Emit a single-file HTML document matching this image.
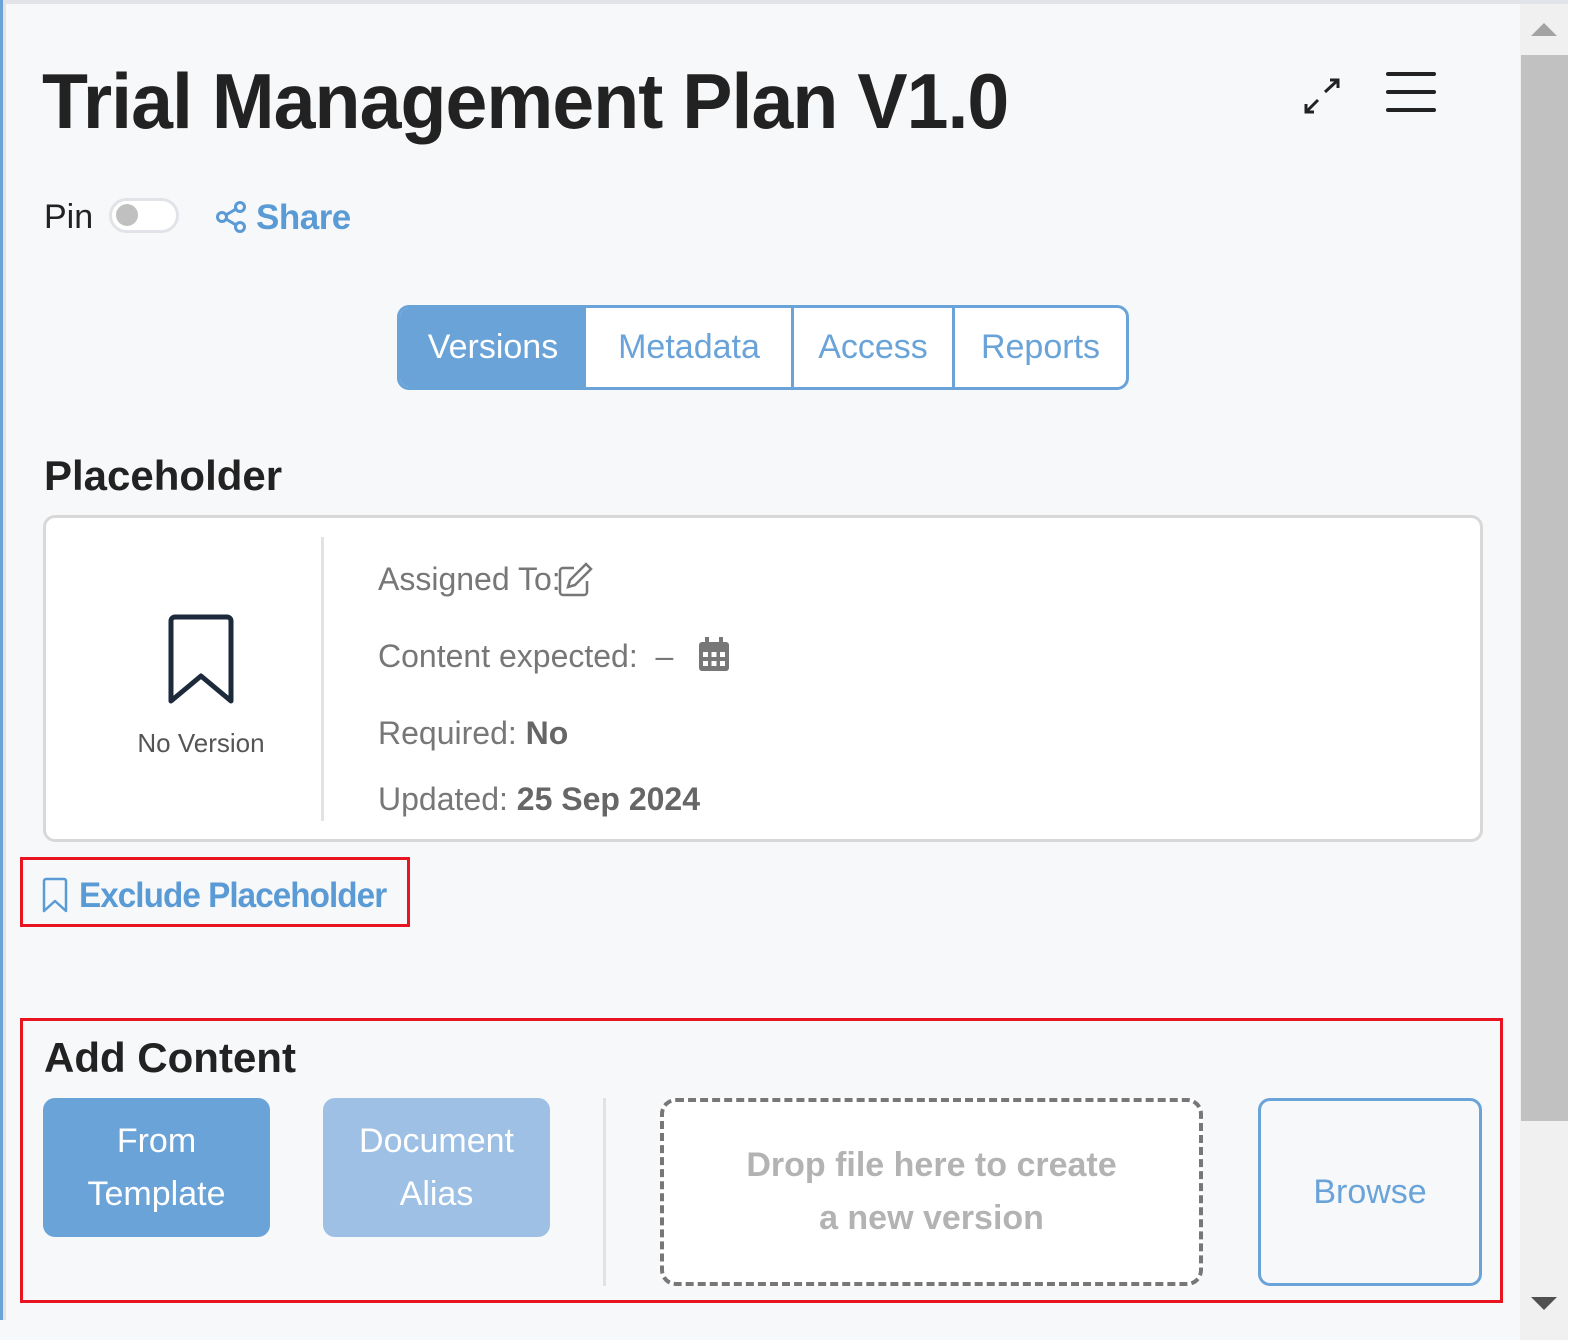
<!DOCTYPE html>
<html><head><meta charset="utf-8"><style>
*{margin:0;padding:0;box-sizing:border-box}
body{width:1587px;height:1340px;background:#fff;position:relative;overflow:hidden;font-family:"Liberation Sans",sans-serif}
.a{position:absolute}
.main{left:0;top:0;width:1520px;height:1340px;background:#f7f8fa}
.t{white-space:nowrap;line-height:1}
.c{display:flex;align-items:center;justify-content:center;text-align:center}
</style></head><body>
<div class="a main"></div>
<div class="a" style="left:0;top:0;width:1568px;height:4px;background:#e1e3e8"></div>
<div class="a" style="left:0;top:0;width:3px;height:1320px;background:#6aa3d8"></div>
<div class="a" style="left:3px;top:0;width:3px;height:1320px;background:#e1e3e8"></div>
<!-- scrollbar -->
<div class="a" style="left:1520px;top:4px;width:48px;height:1336px;background:#f0f0f0"></div>
<div class="a" style="left:1521px;top:55px;width:47px;height:1066px;background:#c1c1c1"></div>
<div class="a" style="left:1531px;top:23px;width:0;height:0;border-left:13px solid transparent;border-right:13px solid transparent;border-bottom:13px solid #a3a3a3"></div>
<div class="a" style="left:1531px;top:1297px;width:0;height:0;border-left:13px solid transparent;border-right:13px solid transparent;border-top:13px solid #505050"></div>

<div class="a t" style="left:42px;top:62px;font-size:78px;font-weight:600;color:#222;letter-spacing:-1px;transform:scaleX(0.965);transform-origin:left">Trial Management Plan V1.0</div>
<svg class="a" style="left:1300px;top:76px" width="44" height="40" viewBox="0 0 44 40" fill="none" stroke="#222" stroke-width="3"><path d="M25 16L38 4M30 4h8v8M18 24L6 36M6 28v8h8"/></svg>
<svg class="a" style="left:1386px;top:70px" width="50" height="44" stroke="#222" stroke-width="4" stroke-linecap="round"><path d="M2 4h46M2 22h46M2 40h46"/></svg>

<div class="a t" style="left:44px;top:200px;font-size:34px;color:#222">Pin</div>
<div class="a" style="left:109px;top:198px;width:70px;height:35px;border-radius:18px;background:#fff;border:3px solid #e1e3e8"></div>
<div class="a" style="left:116px;top:204px;width:22px;height:22px;border-radius:50%;background:#c0c0c0"></div>
<svg class="a" style="left:214px;top:200px" width="34" height="34" fill="none" stroke="#5b9bd5" stroke-width="3"><circle cx="8" cy="17" r="4.5"/><circle cx="26" cy="7" r="4.5"/><circle cx="26" cy="27" r="4.5"/><path d="M12 15l10-6M12 19l10 6"/></svg>
<div class="a t" style="left:256px;top:200px;font-size:35px;font-weight:600;color:#5b9bd5;letter-spacing:-0.5px">Share</div>

<!-- tabs -->
<div class="a" style="left:397px;top:305px;width:732px;height:85px;border:3px solid #6aa3d8;border-radius:12px;background:#fff;overflow:hidden">
<div class="a c" style="left:0;top:0;width:186px;height:79px;background:#6aa3d8;color:#fff;font-size:34px">Versions</div>
<div class="a c" style="left:186px;top:0;width:206px;height:79px;color:#6aa3d8;font-size:34px">Metadata</div>
<div class="a" style="left:391px;top:0;width:3px;height:79px;background:#6aa3d8"></div>
<div class="a c" style="left:394px;top:0;width:158px;height:79px;color:#6aa3d8;font-size:34px">Access</div>
<div class="a" style="left:552px;top:0;width:3px;height:79px;background:#6aa3d8"></div>
<div class="a c" style="left:555px;top:0;width:171px;height:79px;color:#6aa3d8;font-size:34px">Reports</div>
</div>

<div class="a t" style="left:44px;top:455px;font-size:42px;font-weight:600;color:#222">Placeholder</div>
<div class="a" style="left:43px;top:515px;width:1440px;height:327px;background:#fff;border:3px solid #d8d8d8;border-radius:12px"></div>
<div class="a" style="left:321px;top:537px;width:3px;height:284px;background:#e2e2e2"></div>
<svg class="a" style="left:166px;top:613px" width="70" height="94" fill="none" stroke="#1c2a3c" stroke-width="5" stroke-linejoin="round"><path d="M5 8a4 4 0 0 1 4-4h52a4 4 0 0 1 4 4v80L35 63L5 88z"/></svg>
<div class="a c t" style="left:100px;top:728px;width:202px;height:30px;font-size:26px;color:#555">No Version</div>
<div class="a t" style="left:378px;top:563px;font-size:32px;color:#777">Assigned To:</div>
<svg class="a" style="left:558px;top:561px" width="36" height="36" fill="none" stroke="#777" stroke-width="2.5"><path d="M16 7H5a3 3 0 0 0-3 3v21a3 3 0 0 0 3 3h21a3 3 0 0 0 3-3V20"/><path d="M28 3l5 5L17 24l-7 2 2-7z"/></svg>
<div class="a t" style="left:378px;top:640px;font-size:32px;color:#777">Content expected: &nbsp;–</div>
<svg class="a" style="left:699px;top:637px" width="30" height="34"><rect x="0" y="5" width="30" height="29" rx="3" fill="#777"/><rect x="6" y="0" width="4" height="8" fill="#777"/><rect x="20" y="0" width="4" height="8" fill="#777"/><g fill="#fff"><rect x="4" y="15" width="5" height="5"/><rect x="12.5" y="15" width="5" height="5"/><rect x="21" y="15" width="5" height="5"/><rect x="4" y="24" width="5" height="5"/><rect x="12.5" y="24" width="5" height="5"/><rect x="21" y="24" width="5" height="5"/></g></svg>
<div class="a t" style="left:378px;top:717px;font-size:32px;color:#777">Required: <b style="color:#666">No</b></div>
<div class="a t" style="left:378px;top:783px;font-size:32px;color:#777">Updated: <b style="color:#666">25 Sep 2024</b></div>

<div class="a" style="left:20px;top:857px;width:390px;height:70px;border:3px solid #e8141f"></div>
<svg class="a" style="left:41px;top:877px" width="28" height="36" fill="none" stroke="#5b9bd5" stroke-width="2.5" stroke-linejoin="round"><path d="M3 4a2 2 0 0 1 2-2h18a2 2 0 0 1 2 2v30L14 24L3 34z"/></svg>
<div class="a t" style="left:79px;top:878px;font-size:35px;font-weight:600;color:#5b9bd5;letter-spacing:-1px;transform:scaleX(0.95);transform-origin:left">Exclude Placeholder</div>

<div class="a" style="left:20px;top:1018px;width:1483px;height:285px;border:3px solid #e8141f"></div>
<div class="a t" style="left:44px;top:1037px;font-size:42px;font-weight:600;color:#222">Add Content</div>
<div class="a c" style="left:43px;top:1098px;width:227px;height:139px;background:#6aa3d8;border-radius:12px;color:#fff;font-size:34px;line-height:53px">From<br>Template</div>
<div class="a c" style="left:323px;top:1098px;width:227px;height:139px;background:#9dc0e4;border-radius:12px;color:#fff;font-size:34px;line-height:53px">Document<br>Alias</div>
<div class="a" style="left:603px;top:1098px;width:3px;height:188px;background:#e2e2e2"></div>
<div class="a c" style="left:660px;top:1098px;width:543px;height:188px;background:#fff;border:4px dashed #777;border-radius:16px;color:#b3b3b3;font-size:34px;font-weight:700;line-height:53px">Drop file here to create<br>a new version</div>
<div class="a c" style="left:1258px;top:1098px;width:224px;height:188px;border:3px solid #6aa3d8;border-radius:12px;color:#6aa3d8;font-size:34px">Browse</div>
</body></html>
